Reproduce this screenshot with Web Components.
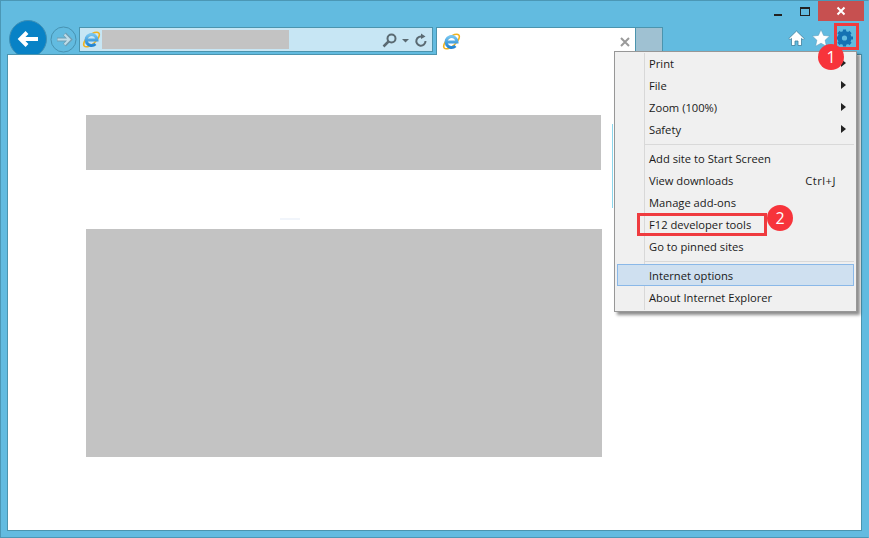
<!DOCTYPE html>
<html>
<head>
<meta charset="utf-8">
<title>Internet Explorer</title>
<style>
  html, body { margin: 0; padding: 0; background: #62bbe0; }
  body { font-family: "Open Sans", "Liberation Sans", sans-serif; width: 869px; height: 538px; overflow: hidden; }
</style>
</head>
<body>
<ie-window>
  <window-controls slot="caption"></window-controls>
  <nav-button slot="nav" kind="back"></nav-button>
  <nav-button slot="nav" kind="forward"></nav-button>
  <address-bar slot="nav"></address-bar>
  <tab-strip slot="nav"></tab-strip>
  <tool-icons slot="nav"></tool-icons>
  <web-page slot="page"></web-page>
  <tools-menu slot="over"></tools-menu>
  <red-mark slot="over" style="left:833px;top:22px;width:25px;height:27px"></red-mark>
  <red-mark slot="over" style="left:636px;top:212px;width:130px;height:23px"></red-mark>
  <step-badge slot="over" style="left:817px;top:43px">1</step-badge>
  <step-badge slot="over" style="left:766px;top:204px">2</step-badge>
</ie-window>

<template id="ie-logo">
  <svg width="17" height="17" viewBox="0 0 17 17" style="overflow:visible">
    <defs>
      <linearGradient id="eg" x1="0" y1="0" x2="0" y2="1">
        <stop offset="0" stop-color="#74c4f0"/>
        <stop offset="1" stop-color="#2284d2"/>
      </linearGradient>
    </defs>
    <ellipse cx="8.500" cy="8.500" rx="9.800" ry="4.400" transform="rotate(-42 8.500 8.500)" fill="none" stroke="#f0b21e" stroke-width="1.500"/>
    <path d="M3 9H14A5.500 5.500 0 1 0 12.400 12.900" fill="none" stroke="url(#eg)" stroke-width="3"/>
  </svg>
</template>

<script>
const logoMarkup = document.getElementById('ie-logo').innerHTML;

class IeWindow extends HTMLElement {
  constructor() {
    super();
    this.attachShadow({mode: 'open'}).innerHTML = `
      <style>
        :host { display: block; position: relative; width: 869px; height: 538px; box-sizing: border-box;
                background: #62bbe0; border: 1px solid #4b97b5; border-right-color: #62bbe0; overflow: hidden; }
        .caption { display: flex; justify-content: flex-end; height: 19px; padding-right: 4px; }
        .nav { display: flex; height: 34px; padding-left: 8px; }
        .page { position: relative; z-index: 1; padding-left: 6px; }
      </style>
      <div class="caption"><slot name="caption"></slot></div>
      <div class="nav"><slot name="nav"></slot></div>
      <div class="page"><slot name="page"></slot></div>
      <slot name="over"></slot>
    `;
  }
}

class WindowControls extends HTMLElement {
  constructor() {
    super();
    this.attachShadow({mode: 'open'}).innerHTML = `
      <style>
        :host { display: flex; align-items: flex-start; height: 20px; }
        .min { width: 8px; height: 2px; background: #222; margin: 13px 18px 0 0; }
        .max { width: 8px; height: 6px; border: 1px solid #222; border-top-width: 2px; margin: 6px 8px 0 0; }
        .close { width: 46px; height: 20px; background: #c75050; display: flex; align-items: center; justify-content: center; }
      </style>
      <div class="min"></div>
      <div class="max"></div>
      <div class="close">
        <svg width="10" height="10" viewBox="0 0 10 10"><path d="M1.500 1.500l7 7M8.500 1.500l-7 7" stroke="#fff" stroke-width="2"/></svg>
      </div>
    `;
  }
}

class NavButton extends HTMLElement {
  constructor() {
    super();
    const back = this.getAttribute('kind') === 'back';
    this.attachShadow({mode: 'open'}).innerHTML = back ? `
      <style>:host { display: block; width: 38px; height: 38px; margin: 0 3px 0 0; flex: none; }</style>
      <svg width="38" height="38" viewBox="0 0 38 38">
        <circle cx="19" cy="19" r="18.500" fill="#0882c6" stroke="#3f8fb5"/>
        <path d="M29 19H11M18 12.500l-6.500 6.500 6.500 6.500" fill="none" stroke="#fff" stroke-width="4"/>
      </svg>
    ` : `
      <style>:host { display: block; width: 27px; height: 27px; margin: 6px 2px 0 0; flex: none; }</style>
      <svg width="27" height="27" viewBox="0 0 27 27">
        <circle cx="13.500" cy="13.500" r="12.500" fill="none" stroke="#4792b1"/>
        <path d="M20 13.500H7M14.500 8l5.500 5.500-5.500 5.500" fill="none" stroke="#6f9fb4" stroke-width="4"/>
        <path d="M19.500 13.500H7.500M14.500 8.500l5 5-5 5" fill="none" stroke="#bfdde9" stroke-width="2"/>
      </svg>
    `;
  }
}

class AddressBar extends HTMLElement {
  constructor() {
    super();
    this.attachShadow({mode: 'open'}).innerHTML = `
      <style>
        :host { display: flex; align-items: center; box-sizing: border-box; width: 354px; height: 25px; margin: 7px 3px 0 0;
                background: #c7e6f4; border: 1px solid #4b94ae; flex: none; }
        .logo { width: 17px; margin: 0 2px 0 3px; display: flex; }
        .url { width: 187px; height: 19px; background: #c3c3c3; }
        .tools { margin-left: auto; margin-right: 3px; display: flex; align-items: center; }
      </style>
      <div class="logo">${logoMarkup}</div>
      <div class="url"></div>
      <div class="tools">
        <svg width="50" height="18" viewBox="0 0 50 18">
          <circle cx="12.500" cy="7.500" r="4" fill="none" stroke="#5a6a72" stroke-width="2"/>
          <path d="M9.500 10.500L4.500 15.500" stroke="#5a6a72" stroke-width="2.500"/>
          <path d="M23 8h7l-3.500 3.500z" fill="#5a6a72"/>
          <path d="M44 6a4.600 4.600 0 1 0 2.500 4" fill="none" stroke="#5a6a72" stroke-width="2"/>
          <path d="M42 2.500l4.500 3-4.500 2.500z" fill="#5a6a72"/>
        </svg>
      </div>
    `;
  }
}

class TabStrip extends HTMLElement {
  constructor() {
    super();
    this.attachShadow({mode: 'open'}).innerHTML = `
      <style>
        :host { display: flex; flex: none; position: relative; z-index: 2; height: 28px; margin-top: 7px; }
        .tab { box-sizing: border-box; width: 200px; background: #fff; border: 1px solid #4b94ae; border-bottom: 0;
               display: flex; align-items: center; padding: 0 4px 0 6px; }
        .x { margin-left: auto; }
        .new { box-sizing: border-box; width: 27px; height: 27px; background: #9fc1d2; border: 1px solid #4b94ae; border-left: 0; border-bottom: 0; }
      </style>
      <div class="tab">
        ${logoMarkup}
        <svg class="x" width="12" height="12" viewBox="0 0 12 12"><path d="M2 2l8 8M10 2l-8 8" stroke="#9a9a9a" stroke-width="2"/></svg>
      </div>
      <div class="new"></div>
    `;
  }
}

class ToolIcons extends HTMLElement {
  constructor() {
    super();
    this.attachShadow({mode: 'open'}).innerHTML = `
      <style>
        :host { display: flex; flex: none; gap: 6px; margin-left: 125px; margin-top: 9px; height: 18px; align-items: center; }
      </style>
      <svg width="18" height="18" viewBox="0 0 18 18">
        <path d="M8.500 2L.8 9.500l1.200 1.200 1.500-1.300V16.500h3.500v-4.500h3v4.500h3.500V9.400l1.500 1.300 1.200-1.200z" fill="#fff" stroke="#3f7f9c" stroke-width=".8"/>
      </svg>
      <svg width="18" height="18" viewBox="0 0 18 18">
        <path d="M9 .8l2.600 5.600 6 .7-4.500 4.100 1.300 6L9 14.200 3.600 17.200l1.300-6L.4 7.100l6-.7z" fill="#fff" stroke="#5d9ab6" stroke-width=".5"/>
      </svg>
      <svg width="18" height="18" viewBox="0 0 18 18">
        <circle cx="8.500" cy="9" r="4.800" fill="none" stroke="#1572b3" stroke-width="4.400"/>
        <path d="M8.500 .5v4M8.500 13.500v4M0 9h4M13 9h4M2.500 3l2.900 2.900M11.600 12.100l2.900 2.900M14.500 3l-2.900 2.900M5.400 12.100l-2.900 2.900" stroke="#1572b3" stroke-width="3.200"/>
      </svg>
    `;
  }
}

class WebPage extends HTMLElement {
  constructor() {
    super();
    this.attachShadow({mode: 'open'}).innerHTML = `
      <style>
        :host { display: block; position: relative; box-sizing: border-box; width: 855px; height: 477px; background: #fff;
                border: 1px solid #4b94ae; padding: 60px 0 0 78px; }
        .b1 { width: 515px; height: 55px; background: #c3c3c3; }
        .gap { height: 59px; display: flex; align-items: flex-end; }
        .tick { width: 20px; height: 2px; background: #f1f5fb; margin: 0 0 9px 194px; }
        .b2 { width: 516px; height: 228px; background: #c3c3c3; }
        .edge { position: absolute; left: 604px; top: 69px; width: 1px; height: 84px; background: #8ad6ec; }
      </style>
      <div class="b1"></div>
      <div class="gap"><div class="tick"></div></div>
      <div class="b2"></div>
      <div class="edge"></div>
    `;
  }
}

class ToolsMenu extends HTMLElement {
  constructor() {
    super();
    const items = [
      ['Print', '', 1], ['File', '', 1], ['Zoom (100%)', '', 1], ['Safety', '', 1], null,
      ['Add site to Start Screen'], ['View downloads', 'Ctrl+J'], ['Manage add-ons'], ['F12 developer tools'], ['Go to pinned sites'], null,
      ['Internet options', '', 0, 1], ['About Internet Explorer']
    ];
    const rows = items.map(it => {
      if (!it) return '<div class="sep"></div>';
      const [label, key, sub, hot] = it;
      return `<div class="row${hot ? ' hot' : ''}"><span>${label}</span>${key ? `<span class="key">${key}</span>` : ''}${sub ? '<i></i>' : ''}</div>`;
    }).join('');
    this.attachShadow({mode: 'open'}).innerHTML = `
      <style>
        :host { display: block; position: absolute; z-index: 3; left: 613px; top: 50px; width: 243px; height: 261px; box-sizing: border-box;
                background: #f0f0f0; border: 1px solid #979797; box-shadow: 3px 3px 3px rgba(0,0,0,.45);
                font: 11.200px "Open Sans", "Liberation Sans", sans-serif; color: #1a1a1a; padding: 0 2px; }
        .rail { position: absolute; left: 29px; top: 1px; bottom: 1px; width: 1px; background: #d8d8d8; }
        .row { position: relative; display: flex; align-items: center; height: 22px; box-sizing: border-box; padding-left: 32px; }
        .key { margin-left: auto; margin-right: 18px; letter-spacing: .5px; }
        i { position: absolute; right: 8px; top: 7px; border-left: 5px solid #222; border-top: 4px solid transparent; border-bottom: 4px solid transparent; }
        .sep { height: 1px; background: #d9d9d9; margin: 4px 0 2px 28px; }
        .hot { background: #cfe0f0; outline: 1px solid #8ab8e8; outline-offset: -1px; margin-top: 1px; }
      </style>
      <div class="rail"></div>
      ${rows}
    `;
  }
}

class RedMark extends HTMLElement {
  constructor() {
    super();
    this.attachShadow({mode: 'open'}).innerHTML = `
      <style>:host { display: block; position: absolute; z-index: 4; box-sizing: border-box; border: 3px solid #ef3b3f; }</style>
    `;
  }
}

class StepBadge extends HTMLElement {
  constructor() {
    super();
    this.attachShadow({mode: 'open'}).innerHTML = `
      <style>
        :host { display: flex; position: absolute; z-index: 5; align-items: center; justify-content: center; width: 26px; height: 26px; border-radius: 50%;
                background: #f7343b; color: #fff; font: 16px "Open Sans", sans-serif; }
      </style>
      <slot></slot>
    `;
  }
}

customElements.define('ie-window', IeWindow);
customElements.define('window-controls', WindowControls);
customElements.define('nav-button', NavButton);
customElements.define('address-bar', AddressBar);
customElements.define('tab-strip', TabStrip);
customElements.define('tool-icons', ToolIcons);
customElements.define('web-page', WebPage);
customElements.define('tools-menu', ToolsMenu);
customElements.define('red-mark', RedMark);
customElements.define('step-badge', StepBadge);
</script>
</body>
</html>
